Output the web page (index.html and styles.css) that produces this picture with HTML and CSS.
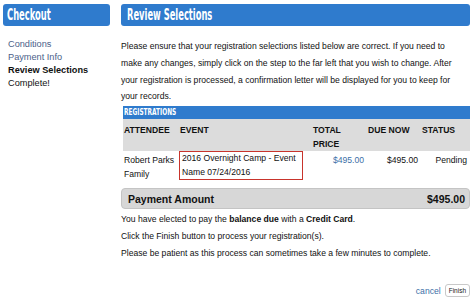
FILE: index.html
```html
<!DOCTYPE html>
<html>
<head>
<meta charset="utf-8">
<link rel="stylesheet" href="styles.css">
</head>
<body>
<div class="page">
  <aside class="side">
    <div class="box-title"><span>Checkout</span></div>
    <ul class="steps">
      <li><a href="#">Conditions</a></li>
      <li><a href="#">Payment Info</a></li>
      <li class="current">Review Selections</li>
      <li>Complete!</li>
    </ul>
  </aside>
  <main class="main">
    <div class="box-title"><span>Review Selections</span></div>
    <p class="intro">Please ensure that your registration selections listed below are correct. If you need to make any changes, simply click on the step to the far left that you wish to change. After your registration is processed, a confirmation letter will be displayed for you to keep for your records.</p>
    <div class="reg-bar"><span>REGISTRATIONS</span></div>
    <table class="reg">
      <thead>
        <tr>
          <th class="c1">ATTENDEE</th>
          <th class="c2">EVENT</th>
          <th class="c3">TOTAL PRICE</th>
          <th class="c4">DUE NOW</th>
          <th class="c5">STATUS</th>
        </tr>
      </thead>
      <tbody>
        <tr>
          <td>Robert Parks Family</td>
          <td class="event"><div class="event-box">2016 Overnight Camp - Event Name 07/24/2016</div></td>
          <td class="num"><a href="#">$495.00</a></td>
          <td class="num">$495.00</td>
          <td class="num">Pending</td>
        </tr>
      </tbody>
    </table>
    <div class="pay-bar"><span>Payment Amount</span><span>$495.00</span></div>
    <div class="notes">
      <p>You have elected to pay the <b>balance due</b> with a <b>Credit Card</b>.</p>
      <p>Click the Finish button to process your registration(s).</p>
      <p>Please be patient as this process can sometimes take a few minutes to complete.</p>
    </div>
    <div class="actions">
      <a href="#" class="cancel">cancel</a>
      <button class="finish">Finish</button>
    </div>
  </main>
</div>
</body>
</html>
```
FILE: styles.css
```css
html, body {
  margin: 0;
  padding: 0;
  background: #fff;
}
body {
  font-family: "Liberation Sans", Arial, sans-serif;
  font-size: 8.6px;
  color: #111;
}
.page {
  display: grid;
  grid-template-columns: 107px 349px;
  column-gap: 11px;
  padding: 4px 0 0 3px;
}
.box-title {
  height: 22px;
  line-height: 22px;
  background: #2f7bcd;
  border-radius: 3px;
  color: #fff;
  font-family: "DejaVu Sans Condensed", "DejaVu Sans", sans-serif;
  font-weight: bold;
  font-size: 16px;
  padding-left: 4px;
  overflow: hidden;
  white-space: nowrap;
}
.box-title span {
  display: inline-block;
  transform: scaleX(0.58);
  transform-origin: left center;
}
.main .box-title {
  padding-left: 6px;
}
.steps {
  list-style: none;
  margin: 12px 0 0 5px;
  padding: 0;
  font-size: 9.2px;
  line-height: 13px;
}
.steps a {
  color: #4b6189;
  text-decoration: none;
}
.steps .current {
  font-weight: bold;
}
.intro {
  margin: 12px 0 0 0;
  line-height: 16.8px;
  padding-right: 10px;
}
.reg-bar {
  margin: 1px 0 0 2px;
  background: #2f7bcd;
  color: #fff;
  height: 13px;
  line-height: 13px;
  font-family: "DejaVu Sans Condensed", "DejaVu Sans", sans-serif;
  font-weight: bold;
  font-size: 9px;
  padding-left: 1px;
  white-space: nowrap;
  overflow: hidden;
}
.reg-bar span {
  display: inline-block;
  transform: scaleX(0.72);
  transform-origin: left center;
}
.reg {
  margin-left: 2px;
  width: 347px;
  border-collapse: collapse;
  table-layout: fixed;
}
.reg th {
  background: #dcdcdc;
  text-align: left;
  font-weight: bold;
  vertical-align: top;
  line-height: 14px;
  padding: 4px 0 0 1px;
}
.reg .c1 { width: 55px; }
.reg .c2 { width: 132px; }
.reg .c3 { width: 54px; }
.reg .c4 { width: 53px; }
.reg td {
  vertical-align: top;
  line-height: 13.5px;
  padding: 3px 0 0 1px;
}
.reg td.event {
  padding: 0;
}
.event-box {
  width: 124px;
  box-sizing: border-box;
  border: 1.5px solid #c8342c;
  padding: 0 2px;
}
.reg td.num {
  text-align: right;
  padding-right: 3px;
}
.reg td.num a {
  color: #3c6fa8;
  text-decoration: none;
}
.pay-bar {
  margin-top: 7px;
  height: 19px;
  background: #d7d7d7;
  border: 1px solid #c4c4c4;
  border-radius: 4px;
  display: flex;
  justify-content: space-between;
  align-items: center;
  padding: 0 4px 0 6px;
  font-weight: bold;
  font-size: 10.5px;
}
.notes {
  margin-top: 2px;
}
.notes p {
  margin: 0;
  line-height: 17px;
}
.actions {
  display: flex;
  justify-content: flex-end;
  align-items: center;
  gap: 4px;
  margin-top: 22px;
}
.cancel {
  color: #3c6fa8;
  text-decoration: none;
  font-size: 8.6px;
}
.finish {
  font-family: "Liberation Sans", Arial, sans-serif;
  font-size: 6.5px;
  background: #fff;
  border: 1px solid #c9c9c9;
  border-radius: 3px;
  padding: 2px 3px;
  color: #222;
}
```
